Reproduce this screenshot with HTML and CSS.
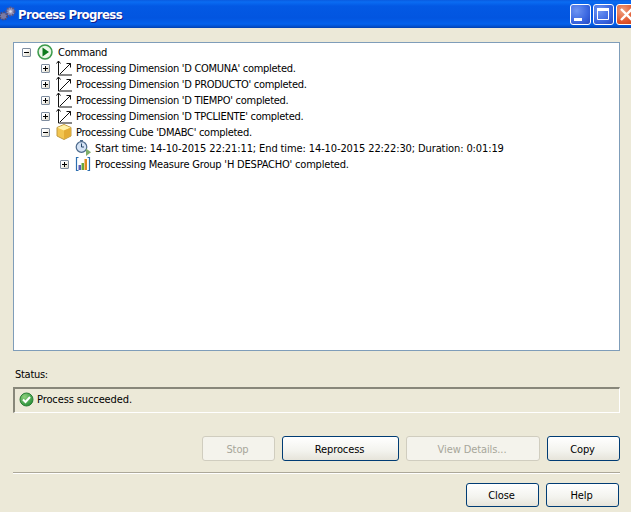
FILE: index.html
```html
<!DOCTYPE html>
<html lang="en">
<head>
<meta charset="utf-8">
<title>Process Progress</title>
<link rel="stylesheet" href="styles.css">
</head>
<body>
<div class="window">
  <header class="titlebar">
    <svg class="app-icon" width="18" height="18" viewBox="0 0 18 18"><circle cx="4.500" cy="11" r="3.600" fill="#7b7ba4" stroke="#4a4a78" stroke-width="1.800" stroke-dasharray="1.700 1"/><circle cx="11.500" cy="6.500" r="4" fill="#9695b8" stroke="#57578a" stroke-width="2" stroke-dasharray="1.800 1.100"/><circle cx="11.500" cy="6.500" r="1.300" fill="#dcdcec"/></svg>
    <h1 class="title">Process Progress</h1>
    <div class="caption-buttons">
      <span class="cap cap-blue"><svg width="21" height="21" viewBox="0 0 21 21"><rect x="4" y="14" width="8" height="3" fill="#fff"/></svg></span>
      <span class="cap cap-blue"><svg width="21" height="21" viewBox="0 0 21 21"><path d="M4.500 4.500h11v11h-11z" fill="none" stroke="#fff"/><rect x="4" y="4" width="12" height="3" fill="#fff"/></svg></span>
      <span class="cap cap-red"><svg width="21" height="21" viewBox="0 0 21 21"><path d="M5 5l11 11M16 5L5 16" stroke="#fff" stroke-width="2.400"/></svg></span>
    </div>
  </header>

  <main class="content">
    <section class="tree">
      <div class="row lvl0">
        <span class="toggle minus"></span>
        <svg class="icon" width="16" height="16" viewBox="0 0 16 16"><defs><radialGradient id="play"><stop offset="0" stop-color="#fff"/><stop offset=".8" stop-color="#e8f5e4"/><stop offset="1" stop-color="#a8d8a0"/></radialGradient></defs><circle cx="8" cy="8" r="7" fill="url(#play)" stroke="#3c9a4c" stroke-width="1.500"/><path d="M5.500 3.500l6.500 4.500-6.500 4.500z" fill="#0c7a1c"/></svg>
        <span class="label">Command</span>
      </div>
      <div class="row lvl1"><span class="toggle plus"></span><svg class="icon" width="16" height="16" viewBox="0 0 16 16"><use href="#dim"/></svg><span class="label">Processing Dimension 'D COMUNA' completed.</span></div>
      <div class="row lvl1"><span class="toggle plus"></span><svg class="icon" width="16" height="16" viewBox="0 0 16 16"><use href="#dim"/></svg><span class="label">Processing Dimension 'D PRODUCTO' completed.</span></div>
      <div class="row lvl1"><span class="toggle plus"></span><svg class="icon" width="16" height="16" viewBox="0 0 16 16"><use href="#dim"/></svg><span class="label">Processing Dimension 'D TIEMPO' completed.</span></div>
      <div class="row lvl1"><span class="toggle plus"></span><svg class="icon" width="16" height="16" viewBox="0 0 16 16"><use href="#dim"/></svg><span class="label">Processing Dimension 'D TPCLIENTE' completed.</span></div>
      <div class="row lvl1">
        <span class="toggle minus"></span>
        <svg class="icon" width="16" height="16" viewBox="0 0 16 16"><path d="M8 .500l7 3v8.500l-7 3.500-7-3.500V3.500z" fill="#f2c550" stroke="#c09a40" stroke-linejoin="round"/><path d="M8 1l6.500 2.700L8 6.500 1.500 3.700z" fill="#fff2a8"/><path d="M8 6.500V15l6.500-3.200V3.700z" fill="#e4ac34"/></svg>
        <span class="label">Processing Cube 'DMABC' completed.</span>
      </div>
      <div class="row lvl2">
        <span class="toggle-space"></span>
        <svg class="icon" width="16" height="16" viewBox="0 0 16 16"><circle cx="6.500" cy="7" r="5.300" fill="#d4e2f4" stroke="#4c6a8c" stroke-width="1.200"/><rect x="5" y="0" width="3" height="1.500" fill="#4c6a8c"/><path d="M6.500 3.500V7h2.500" fill="none" stroke="#28486a"/><path d="M11 8.500l5 3.700-5 3.800z" fill="#7fae68"/></svg>
        <span class="label label-time">Start time: 14-10-2015 22:21:11; End time: 14-10-2015 22:22:30; Duration: 0:01:19</span>
      </div>
      <div class="row lvl2">
        <span class="toggle plus"></span>
        <svg class="icon" width="16" height="16" viewBox="0 0 16 16"><path d="M3.500 1.500H1.500v13h2M12.500 1.500h2v13h-2" fill="none" stroke="#2d6fb0" stroke-width="1.200"/><rect x="3.500" y="9" width="2.500" height="5" fill="#5b5fb4"/><rect x="6.500" y="7" width="2.500" height="7" fill="#69a83c"/><rect x="9.500" y="3" width="2.500" height="11" fill="#e08a1c"/></svg>
        <span class="label label-group">Processing Measure Group 'H DESPACHO' completed.</span>
      </div>
    </section>

    <div class="status-label">Status:</div>
    <div class="status-box">
      <svg class="status-icon" width="15" height="15" viewBox="0 0 15 15"><defs><radialGradient id="ok" cx=".35" cy=".3" r=".8"><stop offset="0" stop-color="#8ed07c"/><stop offset="1" stop-color="#1f8a34"/></radialGradient></defs><circle cx="7.500" cy="7.500" r="6.500" fill="url(#ok)" stroke="#2c7d36"/><path d="M4 7.500l2.500 2.500L11 5" fill="none" stroke="#fff" stroke-width="2"/></svg>
      <span class="status-text">Process succeeded.</span>
    </div>

    <div class="actions">
      <button class="btn btn-stop" disabled>Stop</button>
      <button class="btn btn-reprocess">Reprocess</button>
      <button class="btn btn-details" disabled>View Details...</button>
      <button class="btn btn-copy">Copy</button>
    </div>
    <div class="rule"></div>
    <div class="footer">
      <button class="btn btn-foot">Close</button>
      <button class="btn btn-foot">Help</button>
    </div>
  </main>
</div>
<svg class="defs" width="0" height="0"><defs><g id="dim" fill="none" stroke="#111" stroke-width="1"><path d="M2.500 1v14H16"/><path d="M.5 3.500l2-2.500 2 2.500"/><path d="M4 14L14.500 3.500"/><path d="M10.500 3.500h4v4"/></g></defs></svg>
</body>
</html>
```
FILE: styles.css
```css
* { box-sizing: border-box; }
html, body { margin: 0; padding: 0; }
body { width: 631px; height: 512px; overflow: hidden; background: #ece9d8; font-family: "DejaVu Sans Condensed", "DejaVu Sans", sans-serif; font-stretch: condensed; font-size: 11px; letter-spacing: -0.28px; color: #000; }
.window { display: flex; flex-direction: column; height: 512px; }
.defs { display: block; height: 0; }

.titlebar { flex: none; height: 28px; display: flex; align-items: center; background: linear-gradient(to bottom, #0a5be0 0, #0a6cf2 2px, #0359e4 6px, #0255e0 18px, #0461ec 24px, #0353d4 26px, #0240b0 28px); }
.app-icon { flex: none; margin: 0 0 0 -1px; }
.title { margin: 0 0 0 1px; font-size: 13px; font-weight: 700; letter-spacing: -0.6px; color: #fff; text-shadow: 1px 1px 0 #0f1f8c; flex: 1; }
.caption-buttons { display: flex; gap: 2px; align-self: flex-start; margin: 4px -6px 0 0; }
.cap { display: block; width: 21px; height: 21px; border: 1px solid #fff; border-radius: 3px; }
.cap svg { display: block; margin: -1px; }
.cap-blue { background: radial-gradient(circle at 30% 30%, #6f95f2 0, #3a66e0 60%, #2448c0 100%); }
.cap-red { background: radial-gradient(circle at 30% 30%, #f0a080 0, #e0552c 60%, #c03810 100%); }

.content { flex: 1; padding: 14px 11px 0 13px; display: flex; flex-direction: column; }
.tree { height: 309px; background: #fff; border: 1px solid #7f9db9; padding: 1px 0 0; flex: none; }
.row { height: 16px; display: flex; align-items: center; white-space: nowrap; }
.lvl0 { padding-left: 8px; }
.lvl1 { padding-left: 27px; }
.lvl2 { padding-left: 46px; }
.toggle, .toggle-space { flex: none; width: 9px; height: 9px; margin-right: 6px; position: relative; }
.toggle { border: 1px solid #7f8d9f; border-radius: 1px; background: linear-gradient(135deg, #fff 30%, #d8d4c4 100%); }
.toggle::before { content: ""; position: absolute; left: 1px; top: 3px; width: 5px; height: 1px; background: #000; }
.plus::after { content: ""; position: absolute; left: 3px; top: 1px; width: 1px; height: 5px; background: #000; }
.icon { flex: none; margin-right: 4px; }
.lvl0 .icon { margin-right: 5px; }
.label { line-height: 16px; margin-top: 2px; }
.label-time { letter-spacing: -0.11px; }
.label-group { letter-spacing: -0.2px; }

.status-label { margin-top: 15px; height: 16px; line-height: 16px; padding: 1px 0 0 2px; }
.status-box { margin-top: 5px; height: 26px; display: flex; align-items: center; gap: 3px; padding: 0 0 2px 4px; border: 2px solid; border-color: #88877a #fff #fff #88877a; border-bottom-width: 1px; border-right-width: 1px; }
.status-icon { flex: none; }
.status-text { letter-spacing: -0.11px; }

.actions { margin-top: 23px; display: flex; height: 25px; padding-left: 189px; }
.btn { height: 25px; padding: 1px 2px 0 0; font: inherit; letter-spacing: -0.1px; color: #000; border: 1px solid #003c74; border-radius: 3px; background: linear-gradient(to bottom, #fff 0, #f3f3ee 60%, #e6e4da 100%); }
.btn:disabled { color: #a7a69a; border-color: #d0cdbf; background: #f4f3ec; }
.btn-stop { width: 73px; margin-right: 7px; }
.btn-reprocess { width: 117px; margin-right: 7px; }
.btn-details { width: 134px; margin-right: 7px; }
.btn-copy { width: 73px; }
.rule { margin-top: 11px; height: 2px; border-top: 1px solid #aca899; border-bottom: 1px solid #fff; }
.footer { margin-top: 9px; display: flex; justify-content: flex-end; gap: 7px; padding-right: 1px; }
.btn-foot { width: 73px; height: 24px; }
```
